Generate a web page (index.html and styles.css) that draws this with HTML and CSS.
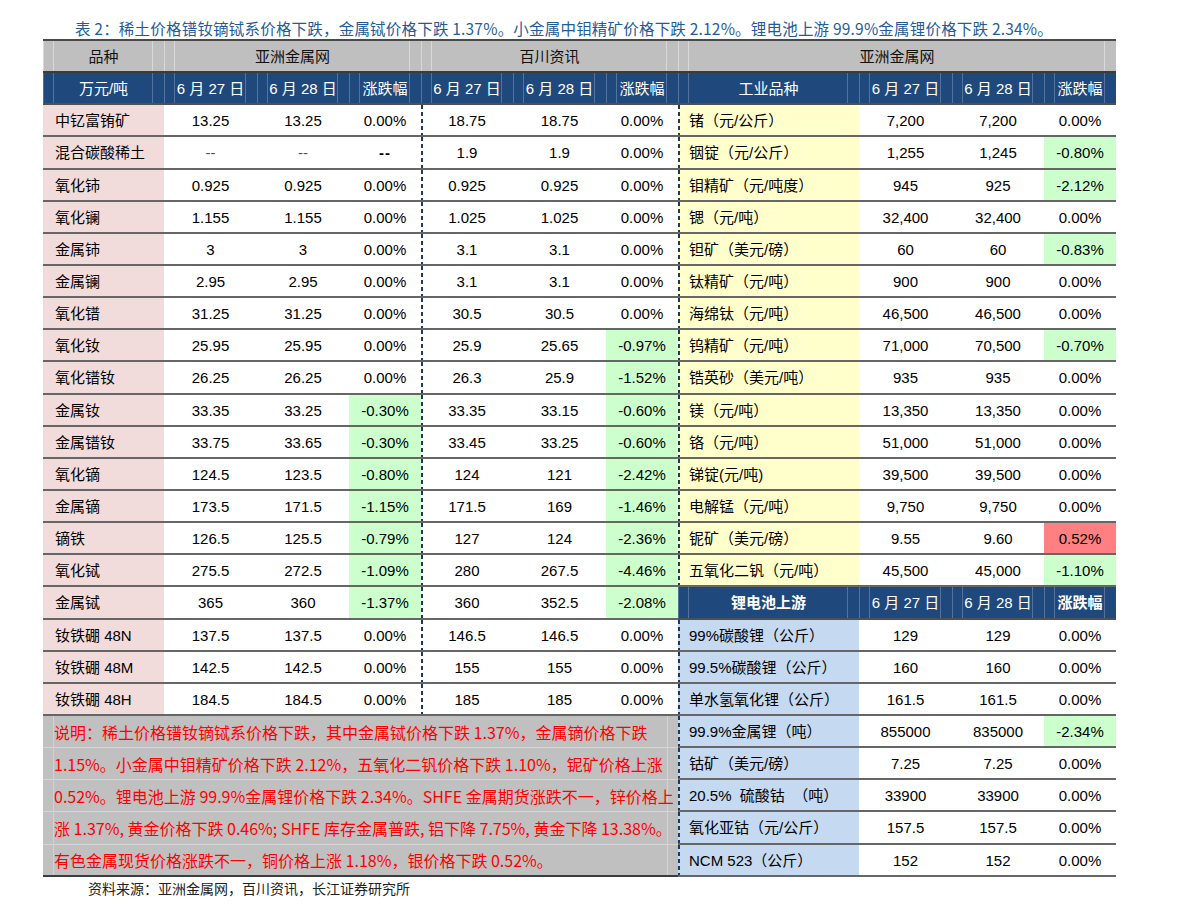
FILE: index.html
```html
<!DOCTYPE html>
<html lang="zh-CN">
<head>
<meta charset="utf-8">
<title>表 2 稀土与小金属价格</title>
<link rel="stylesheet" href="styles.css">
</head>
<body>
<div class="page">
  <div class="title">表 2：稀土价格镨钕镝铽系价格下跌，金属铽价格下跌 1.37%。小金属中钼精矿价格下跌 2.12%。锂电池上游 99.9%金属锂价格下跌 2.34%。</div>
  <div class="grid">
    <!-- header row 1 -->
    <div class="c h1 hl">品种</div>
    <div class="c h1 hl s3">亚洲金属网</div>
    <div class="c h1 hl s3">百川资讯</div>
    <div class="c h1 hl s4">亚洲金属网</div>
    <!-- header row 2 -->
    <div class="c h2 hl">万元/吨</div>
    <div class="c h2 hl">6 月 27 日</div>
    <div class="c h2 hl">6 月 28 日</div>
    <div class="c h2 hl">涨跌幅</div>
    <div class="c h2 hl">6 月 27 日</div>
    <div class="c h2 hl">6 月 28 日</div>
    <div class="c h2 hl">涨跌幅</div>
    <div class="c h2 hl">工业品种</div>
    <div class="c h2 hl">6 月 27 日</div>
    <div class="c h2 hl">6 月 28 日</div>
    <div class="c h2 hl">涨跌幅</div>

    <div class="c name">中钇富铕矿</div><div class="c">13.25</div><div class="c">13.25</div><div class="c">0.00%</div><div class="c dl">18.75</div><div class="c">18.75</div><div class="c">0.00%</div><div class="c ind dl">锗（元/公斤）</div><div class="c">7,200</div><div class="c">7,200</div><div class="c">0.00%</div>

    <div class="c name">混合碳酸稀土</div><div class="c dash">--</div><div class="c dash">--</div><div class="c dash2">--</div><div class="c dl">1.9</div><div class="c">1.9</div><div class="c">0.00%</div><div class="c ind dl">铟锭（元/公斤）</div><div class="c">1,255</div><div class="c">1,245</div><div class="c g">-0.80%</div>

    <div class="c name">氧化铈</div><div class="c">0.925</div><div class="c">0.925</div><div class="c">0.00%</div><div class="c dl">0.925</div><div class="c">0.925</div><div class="c">0.00%</div><div class="c ind dl">钼精矿（元/吨度）</div><div class="c">945</div><div class="c">925</div><div class="c g">-2.12%</div>

    <div class="c name">氧化镧</div><div class="c">1.155</div><div class="c">1.155</div><div class="c">0.00%</div><div class="c dl">1.025</div><div class="c">1.025</div><div class="c">0.00%</div><div class="c ind dl">锶（元/吨）</div><div class="c">32,400</div><div class="c">32,400</div><div class="c">0.00%</div>

    <div class="c name">金属铈</div><div class="c">3</div><div class="c">3</div><div class="c">0.00%</div><div class="c dl">3.1</div><div class="c">3.1</div><div class="c">0.00%</div><div class="c ind dl">钽矿（美元/磅）</div><div class="c">60</div><div class="c">60</div><div class="c g">-0.83%</div>

    <div class="c name">金属镧</div><div class="c">2.95</div><div class="c">2.95</div><div class="c">0.00%</div><div class="c dl">3.1</div><div class="c">3.1</div><div class="c">0.00%</div><div class="c ind dl">钛精矿（元/吨）</div><div class="c">900</div><div class="c">900</div><div class="c">0.00%</div>

    <div class="c name">氧化镨</div><div class="c">31.25</div><div class="c">31.25</div><div class="c">0.00%</div><div class="c dl">30.5</div><div class="c">30.5</div><div class="c">0.00%</div><div class="c ind dl">海绵钛（元/吨）</div><div class="c">46,500</div><div class="c">46,500</div><div class="c">0.00%</div>

    <div class="c name">氧化钕</div><div class="c">25.95</div><div class="c">25.95</div><div class="c">0.00%</div><div class="c dl">25.9</div><div class="c">25.65</div><div class="c g">-0.97%</div><div class="c ind dl">钨精矿（元/吨）</div><div class="c">71,000</div><div class="c">70,500</div><div class="c g">-0.70%</div>

    <div class="c name">氧化镨钕</div><div class="c">26.25</div><div class="c">26.25</div><div class="c">0.00%</div><div class="c dl">26.3</div><div class="c">25.9</div><div class="c g">-1.52%</div><div class="c ind dl">锆英砂（美元/吨）</div><div class="c">935</div><div class="c">935</div><div class="c">0.00%</div>

    <div class="c name">金属钕</div><div class="c">33.35</div><div class="c">33.25</div><div class="c g">-0.30%</div><div class="c dl">33.35</div><div class="c">33.15</div><div class="c g">-0.60%</div><div class="c ind dl">镁（元/吨）</div><div class="c">13,350</div><div class="c">13,350</div><div class="c">0.00%</div>

    <div class="c name">金属镨钕</div><div class="c">33.75</div><div class="c">33.65</div><div class="c g">-0.30%</div><div class="c dl">33.45</div><div class="c">33.25</div><div class="c g">-0.60%</div><div class="c ind dl">铬（元/吨）</div><div class="c">51,000</div><div class="c">51,000</div><div class="c">0.00%</div>

    <div class="c name">氧化镝</div><div class="c">124.5</div><div class="c">123.5</div><div class="c g">-0.80%</div><div class="c dl">124</div><div class="c">121</div><div class="c g">-2.42%</div><div class="c ind dl">锑锭(元/吨)</div><div class="c">39,500</div><div class="c">39,500</div><div class="c">0.00%</div>

    <div class="c name">金属镝</div><div class="c">173.5</div><div class="c">171.5</div><div class="c g">-1.15%</div><div class="c dl">171.5</div><div class="c">169</div><div class="c g">-1.46%</div><div class="c ind dl">电解锰（元/吨）</div><div class="c">9,750</div><div class="c">9,750</div><div class="c">0.00%</div>

    <div class="c name">镝铁</div><div class="c">126.5</div><div class="c">125.5</div><div class="c g">-0.79%</div><div class="c dl">127</div><div class="c">124</div><div class="c g">-2.36%</div><div class="c ind dl">铌矿（美元/磅）</div><div class="c">9.55</div><div class="c">9.60</div><div class="c r">0.52%</div>

    <div class="c name">氧化铽</div><div class="c">275.5</div><div class="c">272.5</div><div class="c g">-1.09%</div><div class="c dl">280</div><div class="c">267.5</div><div class="c g">-4.46%</div><div class="c ind dl">五氧化二钒（元/吨）</div><div class="c">45,500</div><div class="c">45,000</div><div class="c g">-1.10%</div>

    <div class="c name">金属铽</div><div class="c">365</div><div class="c">360</div><div class="c g">-1.37%</div><div class="c dl">360</div><div class="c">352.5</div><div class="c g">-2.08%</div><div class="c h2 hl b">锂电池上游</div><div class="c h2 hl">6 月 27 日</div><div class="c h2 hl">6 月 28 日</div><div class="c h2 hl b">涨跌幅</div>

    <div class="c name">钕铁硼 48N</div><div class="c">137.5</div><div class="c">137.5</div><div class="c">0.00%</div><div class="c dl">146.5</div><div class="c">146.5</div><div class="c">0.00%</div><div class="c li dl">99%碳酸锂（公斤）</div><div class="c">129</div><div class="c">129</div><div class="c">0.00%</div>

    <div class="c name">钕铁硼 48M</div><div class="c">142.5</div><div class="c">142.5</div><div class="c">0.00%</div><div class="c dl">155</div><div class="c">155</div><div class="c">0.00%</div><div class="c li dl">99.5%碳酸锂（公斤）</div><div class="c">160</div><div class="c">160</div><div class="c">0.00%</div>

    <div class="c name">钕铁硼 48H</div><div class="c">184.5</div><div class="c">184.5</div><div class="c">0.00%</div><div class="c dl">185</div><div class="c">185</div><div class="c">0.00%</div><div class="c li dl">单水氢氧化锂（公斤）</div><div class="c">161.5</div><div class="c">161.5</div><div class="c">0.00%</div>

    <div class="note">
      <div class="nl">说明：稀土价格镨钕镝铽系价格下跌，其中金属铽价格下跌 1.37%，金属镝价格下跌</div>
      <div class="nl">1.15%。小金属中钼精矿价格下跌 2.12%，五氧化二钒价格下跌 1.10%，铌矿价格上涨</div>
      <div class="nl">0.52%。锂电池上游 99.9%金属锂价格下跌 2.34%。SHFE 金属期货涨跌不一，锌价格上</div>
      <div class="nl">涨 1.37%, 黄金价格下跌 0.46%; SHFE 库存金属普跌, 铝下降 7.75%, 黄金下降 13.38%。</div>
      <div class="nl">有色金属现货价格涨跌不一，铜价格上涨 1.18%，银价格下跌 0.52%。</div>
    </div>
    <div class="c li dl">99.9%金属锂（吨）</div><div class="c">855000</div><div class="c">835000</div><div class="c g">-2.34%</div>
    <div class="c li dl">钴矿（美元/磅）</div><div class="c">7.25</div><div class="c">7.25</div><div class="c">0.00%</div>
    <div class="c li dl">20.5%&nbsp;&nbsp;硫酸钴&nbsp;&nbsp;（吨）</div><div class="c">33900</div><div class="c">33900</div><div class="c">0.00%</div>
    <div class="c li dl">氧化亚钴（元/公斤）</div><div class="c">157.5</div><div class="c">157.5</div><div class="c">0.00%</div>
    <div class="c li dl">NCM 523（公斤）</div><div class="c">152</div><div class="c">152</div><div class="c">0.00%</div>
  </div>
  <div class="source">资料来源：亚洲金属网，百川资讯，长江证券研究所</div>
</div>
</body>
</html>
```

FILE: styles.css
```css
html, body {
  margin: 0;
  padding: 0;
  background: #ffffff;
}

.page {
  padding-top: 18px;
  font-family: "Liberation Sans", "Noto Sans CJK SC", sans-serif;
  color: #000;
}

.title {
  height: 21px;
  line-height: 20px;
  padding-left: 75px;
  font-size: 15.5px;
  letter-spacing: 0.2px;
  color: #1f5c98;
  font-family: "Noto Sans CJK SC", sans-serif;
  white-space: nowrap;
}

.grid {
  margin-left: 43px;
  width: 1073px;
  display: grid;
  grid-template-columns: 121px 93px 92px 72px 92px 93px 72px 181px 93px 92px 72px;
  grid-auto-rows: 32.15px;
  border-top: 2px solid #4a4a4a;
}

.c {
  box-sizing: border-box;
  display: flex;
  align-items: center;
  justify-content: center;
  border-bottom: 2px solid #666666;
  background-color: #ffffff;
  font-size: 15px;
  line-height: 1;
  white-space: nowrap;
  padding-top: 1px;
}

.s3 { grid-column: span 3; }
.s4 { grid-column: span 4; }

.h1 {
  background-color: #bfbfbf;
  color: #111;
  border-bottom-color: #3c3c3c;
  --ln: #d9d9d9;
}

.h2 {
  background-color: #1f497d;
  color: #ffffff;
  border-bottom-color: #505050;
  --ln: #53739e;
}

.hl {
  background-image: linear-gradient(to right,
    var(--ln) 0, var(--ln) 1px,
    transparent 1px, transparent 10px,
    var(--ln) 10px, var(--ln) 11px,
    transparent 11px, transparent calc(100% - 12px),
    var(--ln) calc(100% - 12px), var(--ln) calc(100% - 11px),
    transparent calc(100% - 11px));
}

.b { font-weight: bold; }

.name {
  background-color: #f2dcdb;
  justify-content: flex-start;
  padding-left: 12px;
}

.ind {
  background-color: #ffffcc;
  justify-content: flex-start;
  padding-left: 11px;
}

.li {
  background-color: #c5d9f1;
  justify-content: flex-start;
  padding-left: 11px;
}

.g { background-color: #ccffcc; }
.r { background-color: #ff8080; }

.dash { color: #555; }
.dash2 { font-weight: bold; letter-spacing: 1px; }

.dl {
  background-image: linear-gradient(to bottom, #1f3864 0, #1f3864 4px, transparent 4px);
  background-size: 2px 7px;
  background-repeat: repeat-y;
  background-position: 0 0;
}

.note {
  grid-column: 1 / 8;
  grid-row: span 5;
  box-sizing: border-box;
  background-color: #c0c0c0;
  background-image: linear-gradient(to right,
    transparent 10px, #d2d2d2 10px, #d2d2d2 11px,
    transparent 11px, transparent calc(100% - 11px),
    #d2d2d2 calc(100% - 11px), #d2d2d2 calc(100% - 10px),
    transparent calc(100% - 10px));
  border-bottom: 2px solid #3c3c3c;
  display: flex;
  flex-direction: column;
}

.nl {
  box-sizing: border-box;
  height: 32.15px;
  flex: none;
  display: flex;
  align-items: center;
  padding-left: 11px;
  border-bottom: 1px solid #d6d6d6;
  color: #ff0000;
  font-family: "Noto Sans CJK SC", sans-serif;
  font-size: 16px;
  white-space: nowrap;
  line-height: 1;
}

.nl:last-child {
  border-bottom: 0;
  height: 30.75px;
}

.source {
  margin-top: 2px;
  padding-left: 88px;
  line-height: 18px;
  font-size: 14px;
  color: #222;
  font-family: "Noto Sans CJK SC", sans-serif;
}
```
